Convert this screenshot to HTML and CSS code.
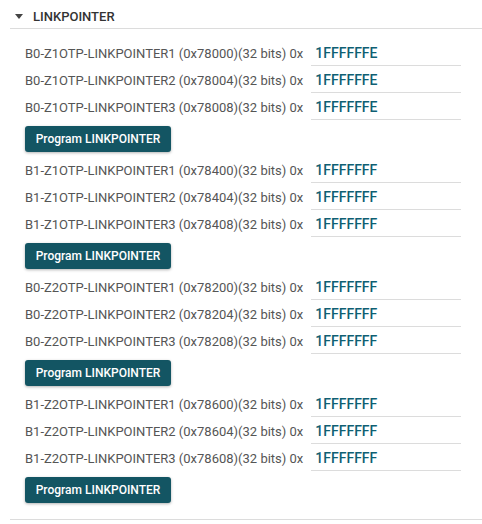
FILE: index.html
```html
<!DOCTYPE html>
<html lang="en">
<head>
    <meta charset="UTF-8">
    <title>LINKPOINTER</title>
    <link rel="stylesheet" href="styles.css">
</head>
<body>
    <div class="section">
        <div class="section-header">
            <span class="caret"></span>
            <span class="section-title">LINKPOINTER</span>
        </div>
        <div class="section-body">
            <div class="group">
                <div class="field"><span class="label">B0-Z1OTP-LINKPOINTER1 (0x78000)(32 bits) 0x</span><span class="value">1FFFFFFE</span></div>
                <div class="field"><span class="label">B0-Z1OTP-LINKPOINTER2 (0x78004)(32 bits) 0x</span><span class="value">1FFFFFFE</span></div>
                <div class="field"><span class="label">B0-Z1OTP-LINKPOINTER3 (0x78008)(32 bits) 0x</span><span class="value">1FFFFFFE</span></div>
                <button class="btn">Program LINKPOINTER</button>
            </div>
            <div class="group">
                <div class="field"><span class="label">B1-Z1OTP-LINKPOINTER1 (0x78400)(32 bits) 0x</span><span class="value">1FFFFFFF</span></div>
                <div class="field"><span class="label">B1-Z1OTP-LINKPOINTER2 (0x78404)(32 bits) 0x</span><span class="value">1FFFFFFF</span></div>
                <div class="field"><span class="label">B1-Z1OTP-LINKPOINTER3 (0x78408)(32 bits) 0x</span><span class="value">1FFFFFFF</span></div>
                <button class="btn">Program LINKPOINTER</button>
            </div>
            <div class="group">
                <div class="field"><span class="label">B0-Z2OTP-LINKPOINTER1 (0x78200)(32 bits) 0x</span><span class="value">1FFFFFFF</span></div>
                <div class="field"><span class="label">B0-Z2OTP-LINKPOINTER2 (0x78204)(32 bits) 0x</span><span class="value">1FFFFFFF</span></div>
                <div class="field"><span class="label">B0-Z2OTP-LINKPOINTER3 (0x78208)(32 bits) 0x</span><span class="value">1FFFFFFF</span></div>
                <button class="btn">Program LINKPOINTER</button>
            </div>
            <div class="group">
                <div class="field"><span class="label">B1-Z2OTP-LINKPOINTER1 (0x78600)(32 bits) 0x</span><span class="value">1FFFFFFF</span></div>
                <div class="field"><span class="label">B1-Z2OTP-LINKPOINTER2 (0x78604)(32 bits) 0x</span><span class="value">1FFFFFFF</span></div>
                <div class="field"><span class="label">B1-Z2OTP-LINKPOINTER3 (0x78608)(32 bits) 0x</span><span class="value">1FFFFFFF</span></div>
                <button class="btn">Program LINKPOINTER</button>
            </div>
        </div>
    </div>
</body>
</html>
```

FILE: styles.css
```css
body {
    font-family: Roboto, 'Liberation Sans', sans-serif;
    margin: 0;
    background-color: #fff;
    color: #555;
}

.section {
    margin-left: 10px;
    padding-top: 4px;
}

.section-header {
    display: flex;
    align-items: center;
    height: 24px;
    padding-left: 5px;
    border-bottom: 1px solid #dcdcdc;
}

.caret {
    width: 0;
    height: 0;
    border-left: 4px solid transparent;
    border-right: 4px solid transparent;
    border-top: 5px solid #444;
    margin-right: 10px;
}

.section-title {
    font-size: 13px;
    font-weight: 500;
    color: #333;
}

.section-body {
    padding: 11px 0 11px 15px;
    border-bottom: 1px solid #dcdcdc;
}

.group {
    padding-bottom: 5px;
}

.field {
    display: flex;
    align-items: center;
    height: 27px;
}

.label {
    font-size: 13px;
    color: #555;
    margin-right: 8px;
    white-space: nowrap;
}

.value {
    width: 146px;
    height: 24px;
    line-height: 25px;
    padding-left: 4px;
    border-bottom: 1px solid #dcdcdc;
    font-size: 14px;
    font-weight: 500;
    color: #0f5f73;
}

.btn {
    margin-top: 5px;
    height: 26px;
    width: 146px;
    padding: 0;
    background-color: #135563;
    color: #fff;
    border: none;
    border-radius: 3px;
    box-shadow: 0 1px 3px rgba(0,0,0,0.3);
    font-family: Roboto, 'Liberation Sans', sans-serif;
    font-size: 12px;
    font-weight: 500;
    cursor: pointer;
}
```
